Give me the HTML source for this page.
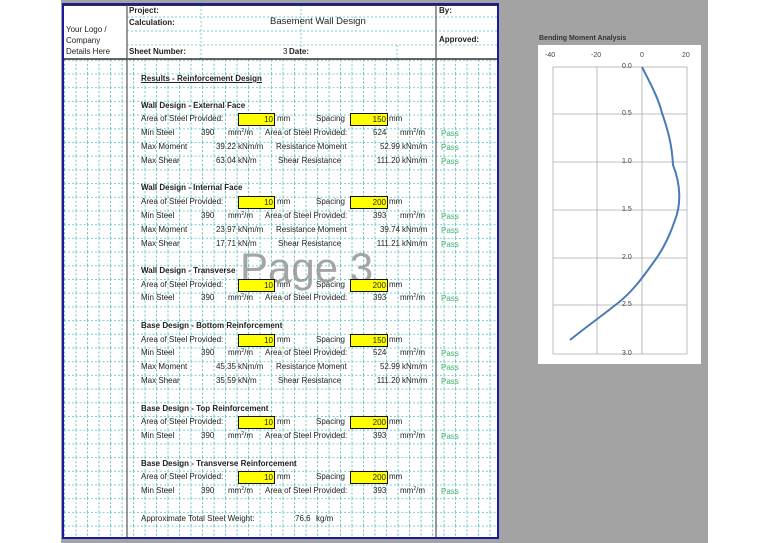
<!DOCTYPE html>
<html><head><meta charset="utf-8"><style>
*{margin:0;padding:0;box-sizing:border-box}
body{width:768px;height:543px;background:#fff;position:relative;overflow:hidden;font-family:"Liberation Sans",Arial,sans-serif;font-size:8px;color:#222}
#grey{position:absolute;left:61px;top:0;width:647px;height:543px;background:#a3a3a3}
#page{position:absolute;left:62px;top:3px;width:437px;height:536px;background:#fff;border:2px solid #1a1aa0}
.t{position:absolute;white-space:nowrap;line-height:10px}
.b{font-weight:bold}
.g{color:#3cb36a}
.r{text-align:right}
.y{position:absolute;background:#ffff00;border:1.5px solid #111;height:13px;text-align:right;line-height:11px;padding-right:1px}
sup{font-size:5px;vertical-align:top;line-height:6px}
.ax{position:absolute;font-size:7px;color:#444;line-height:8px}
</style></head><body>
<div id="grey"></div>
<div id="page">
<svg width="433" height="532" style="position:absolute;left:0;top:0">
<defs>
<pattern id="p" x="0" y="0" width="11.5" height="13.7" patternUnits="userSpaceOnUse">
<line x1="0.5" y1="0" x2="0.5" y2="13.7" stroke="#6cc4cc" stroke-width="1" stroke-dasharray="2,2"/>
<line x1="0" y1="0.5" x2="11.5" y2="0.5" stroke="#7ccccc" stroke-width="1" stroke-dasharray="2,2"/>
</pattern>
</defs>
<rect x="0" y="54" width="433" height="478" fill="url(#p)"/>
<g stroke="#7ccccc" stroke-dasharray="2,2">
<line x1="63" y1="12" x2="433" y2="12"/>
<line x1="63" y1="26" x2="433" y2="26"/>
<line x1="63" y1="40" x2="433" y2="40"/>
<line x1="137" y1="0" x2="137" y2="54"/>
<line x1="237" y1="0" x2="237" y2="54"/>
<line x1="333" y1="40" x2="333" y2="54"/>
</g>
<line x1="0" y1="0.5" x2="433" y2="0.5" stroke="#333"/>
<line x1="0" y1="54" x2="433" y2="54" stroke="#333" stroke-width="1.5"/>
<line x1="63" y1="0" x2="63" y2="532" stroke="#555" stroke-width="1.2"/>
<line x1="372" y1="0" x2="372" y2="532" stroke="#555" stroke-width="1.2"/>
</svg>
</div>
<div style="position:absolute;left:240px;top:246px;font-size:42px;color:#888;opacity:.75;line-height:44px">Page 3</div>

<span class="t b" style="left:129px;top:6px">Project:</span>
<span class="t b" style="left:439px;top:6px">By:</span>
<span class="t" style="left:66px;top:25px">Your Logo /</span>
<span class="t" style="left:66px;top:36px">Company</span>
<span class="t" style="left:66px;top:47px">Details Here</span>
<span class="t b" style="left:129px;top:18px">Calculation:</span>
<span class="t" style="left:270px;top:17px;font-size:9.5px">Basement Wall Design</span>
<span class="t b" style="left:439px;top:35px">Approved:</span>
<span class="t b" style="left:129px;top:47px">Sheet Number:</span>
<span class="t" style="left:283px;top:47px">3</span>
<span class="t b" style="left:289px;top:47px">Date:</span>

<span class="t b" style="left:141px;top:74px;text-decoration:underline">Results - Reinforcement Design</span>

<span class="t b" style="left:141px;top:101px">Wall Design - External Face</span>
<span class="t" style="left:141px;top:114px">Area of Steel Provided:</span><div class="y" style="left:238px;top:113px;width:37px">10</div><span class="t" style="left:277px;top:114px">mm</span><span class="t" style="left:316px;top:114px">Spacing</span><div class="y" style="left:350px;top:113px;width:38px">150</div><span class="t" style="left:389px;top:114px">mm</span>
<span class="t" style="left:141px;top:128px">Min Steel</span><span class="t" style="left:201px;top:128px">390</span><span class="t" style="left:228px;top:128px">mm<sup>2</sup>/m</span><span class="t" style="left:265px;top:128px">Area of Steel Provided:</span><span class="t" style="left:373px;top:128px">524</span><span class="t" style="left:400px;top:128px">mm<sup>2</sup>/m</span><span class="t g" style="left:441px;top:129px">Pass</span>
<span class="t" style="left:141px;top:142px">Max Moment</span><span class="t r" style="left:196px;top:142px;width:40px">39.22</span><span class="t" style="left:238px;top:142px">kNm/m</span><span class="t" style="left:276px;top:142px">Resistance Moment</span><span class="t r" style="left:360px;top:142px;width:40px">52.99</span><span class="t" style="left:402px;top:142px">kNm/m</span><span class="t g" style="left:441px;top:143px">Pass</span>
<span class="t" style="left:141px;top:156px">Max Shear</span><span class="t r" style="left:196px;top:156px;width:40px">63.04</span><span class="t" style="left:238px;top:156px">kN/m</span><span class="t" style="left:278px;top:156px">Shear Resistance</span><span class="t r" style="left:360px;top:156px;width:40px">111.20</span><span class="t" style="left:402px;top:156px">kNm/m</span><span class="t g" style="left:441px;top:157px">Pass</span>

<span class="t b" style="left:141px;top:183px">Wall Design - Internal Face</span>
<span class="t" style="left:141px;top:197px">Area of Steel Provided:</span><div class="y" style="left:238px;top:196px;width:37px">10</div><span class="t" style="left:277px;top:197px">mm</span><span class="t" style="left:316px;top:197px">Spacing</span><div class="y" style="left:350px;top:196px;width:38px">200</div><span class="t" style="left:389px;top:197px">mm</span>
<span class="t" style="left:141px;top:211px">Min Steel</span><span class="t" style="left:201px;top:211px">390</span><span class="t" style="left:228px;top:211px">mm<sup>2</sup>/m</span><span class="t" style="left:265px;top:211px">Area of Steel Provided:</span><span class="t" style="left:373px;top:211px">393</span><span class="t" style="left:400px;top:211px">mm<sup>2</sup>/m</span><span class="t g" style="left:441px;top:212px">Pass</span>
<span class="t" style="left:141px;top:225px">Max Moment</span><span class="t r" style="left:196px;top:225px;width:40px">23.97</span><span class="t" style="left:238px;top:225px">kNm/m</span><span class="t" style="left:276px;top:225px">Resistance Moment</span><span class="t r" style="left:360px;top:225px;width:40px">39.74</span><span class="t" style="left:402px;top:225px">kNm/m</span><span class="t g" style="left:441px;top:226px">Pass</span>
<span class="t" style="left:141px;top:239px">Max Shear</span><span class="t r" style="left:196px;top:239px;width:40px">17.71</span><span class="t" style="left:238px;top:239px">kN/m</span><span class="t" style="left:278px;top:239px">Shear Resistance</span><span class="t r" style="left:360px;top:239px;width:40px">111.21</span><span class="t" style="left:402px;top:239px">kNm/m</span><span class="t g" style="left:441px;top:240px">Pass</span>

<span class="t b" style="left:141px;top:266px">Wall Design - Transverse</span>
<span class="t" style="left:141px;top:280px">Area of Steel Provided:</span><div class="y" style="left:238px;top:279px;width:37px">10</div><span class="t" style="left:277px;top:280px">mm</span><span class="t" style="left:316px;top:280px">Spacing</span><div class="y" style="left:350px;top:279px;width:38px">200</div><span class="t" style="left:389px;top:280px">mm</span>
<span class="t" style="left:141px;top:293px">Min Steel</span><span class="t" style="left:201px;top:293px">390</span><span class="t" style="left:228px;top:293px">mm<sup>2</sup>/m</span><span class="t" style="left:265px;top:293px">Area of Steel Provided:</span><span class="t" style="left:373px;top:293px">393</span><span class="t" style="left:400px;top:293px">mm<sup>2</sup>/m</span><span class="t g" style="left:441px;top:294px">Pass</span>

<span class="t b" style="left:141px;top:321px">Base Design - Bottom Reinforcement</span>
<span class="t" style="left:141px;top:335px">Area of Steel Provided:</span><div class="y" style="left:238px;top:334px;width:37px">10</div><span class="t" style="left:277px;top:335px">mm</span><span class="t" style="left:316px;top:335px">Spacing</span><div class="y" style="left:350px;top:334px;width:38px">150</div><span class="t" style="left:389px;top:335px">mm</span>
<span class="t" style="left:141px;top:348px">Min Steel</span><span class="t" style="left:201px;top:348px">390</span><span class="t" style="left:228px;top:348px">mm<sup>2</sup>/m</span><span class="t" style="left:265px;top:348px">Area of Steel Provided:</span><span class="t" style="left:373px;top:348px">524</span><span class="t" style="left:400px;top:348px">mm<sup>2</sup>/m</span><span class="t g" style="left:441px;top:349px">Pass</span>
<span class="t" style="left:141px;top:362px">Max Moment</span><span class="t r" style="left:196px;top:362px;width:40px">45.35</span><span class="t" style="left:238px;top:362px">kNm/m</span><span class="t" style="left:276px;top:362px">Resistance Moment</span><span class="t r" style="left:360px;top:362px;width:40px">52.99</span><span class="t" style="left:402px;top:362px">kNm/m</span><span class="t g" style="left:441px;top:363px">Pass</span>
<span class="t" style="left:141px;top:376px">Max Shear</span><span class="t r" style="left:196px;top:376px;width:40px">35.59</span><span class="t" style="left:238px;top:376px">kN/m</span><span class="t" style="left:278px;top:376px">Shear Resistance</span><span class="t r" style="left:360px;top:376px;width:40px">111.20</span><span class="t" style="left:402px;top:376px">kNm/m</span><span class="t g" style="left:441px;top:377px">Pass</span>

<span class="t b" style="left:141px;top:404px">Base Design - Top Reinforcement</span>
<span class="t" style="left:141px;top:417px">Area of Steel Provided:</span><div class="y" style="left:238px;top:416px;width:37px">10</div><span class="t" style="left:277px;top:417px">mm</span><span class="t" style="left:316px;top:417px">Spacing</span><div class="y" style="left:350px;top:416px;width:38px">200</div><span class="t" style="left:389px;top:417px">mm</span>
<span class="t" style="left:141px;top:431px">Min Steel</span><span class="t" style="left:201px;top:431px">390</span><span class="t" style="left:228px;top:431px">mm<sup>2</sup>/m</span><span class="t" style="left:265px;top:431px">Area of Steel Provided:</span><span class="t" style="left:373px;top:431px">393</span><span class="t" style="left:400px;top:431px">mm<sup>2</sup>/m</span><span class="t g" style="left:441px;top:432px">Pass</span>

<span class="t b" style="left:141px;top:459px">Base Design - Transverse Reinforcement</span>
<span class="t" style="left:141px;top:472px">Area of Steel Provided:</span><div class="y" style="left:238px;top:471px;width:37px">10</div><span class="t" style="left:277px;top:472px">mm</span><span class="t" style="left:316px;top:472px">Spacing</span><div class="y" style="left:350px;top:471px;width:38px">200</div><span class="t" style="left:389px;top:472px">mm</span>
<span class="t" style="left:141px;top:486px">Min Steel</span><span class="t" style="left:201px;top:486px">390</span><span class="t" style="left:228px;top:486px">mm<sup>2</sup>/m</span><span class="t" style="left:265px;top:486px">Area of Steel Provided:</span><span class="t" style="left:373px;top:486px">393</span><span class="t" style="left:400px;top:486px">mm<sup>2</sup>/m</span><span class="t g" style="left:441px;top:487px">Pass</span>

<span class="t" style="left:141px;top:514px">Approximate Total Steel Weight:</span><span class="t" style="left:295px;top:514px">76.6</span><span class="t" style="left:316px;top:514px">kg/m</span>

<span class="t b" style="left:539px;top:34px;font-size:7px;color:#333">Bending Moment Analysis</span>
<div style="position:absolute;left:538px;top:45px;width:163px;height:319px;background:#fff"></div>
<svg width="163" height="319" style="position:absolute;left:538px;top:45px">
<g stroke="#aaa" stroke-width="0.8" fill="none">
<line x1="15" y1="22" x2="15" y2="309"/><line x1="59" y1="22" x2="59" y2="309"/>
<line x1="104" y1="22" x2="104" y2="309"/><line x1="149" y1="22" x2="149" y2="309"/>
<line x1="15" y1="22" x2="149" y2="22"/><line x1="15" y1="69" x2="149" y2="69"/>
<line x1="15" y1="117" x2="149" y2="117"/><line x1="15" y1="165" x2="149" y2="165"/>
<line x1="15" y1="213" x2="149" y2="213"/><line x1="15" y1="260" x2="149" y2="260"/>
<line x1="15" y1="309" x2="149" y2="309"/>
</g>
<path d="M104 22 C112 38 120 52 124 68 C130 85 134 100 135 120 C143 140 143 160 137 175 C132 190 125 205 115 218 C105 232 95 246 80 258 C65 270 48 282 32 295" stroke="#4a7ab8" stroke-width="2" fill="none"/>
</svg>
<span class="ax" style="left:545px;top:52px">-40</span>
<span class="ax" style="left:591px;top:52px">-20</span>
<span class="ax" style="left:640px;top:52px">0</span>
<span class="ax" style="left:682px;top:52px">20</span>
<span class="ax" style="left:622px;top:63px">0.0</span>
<span class="ax" style="left:622px;top:110px">0.5</span>
<span class="ax" style="left:622px;top:158px">1.0</span>
<span class="ax" style="left:622px;top:206px">1.5</span>
<span class="ax" style="left:622px;top:254px">2.0</span>
<span class="ax" style="left:622px;top:301px">2.5</span>
<span class="ax" style="left:622px;top:350px">3.0</span>
</body></html>
